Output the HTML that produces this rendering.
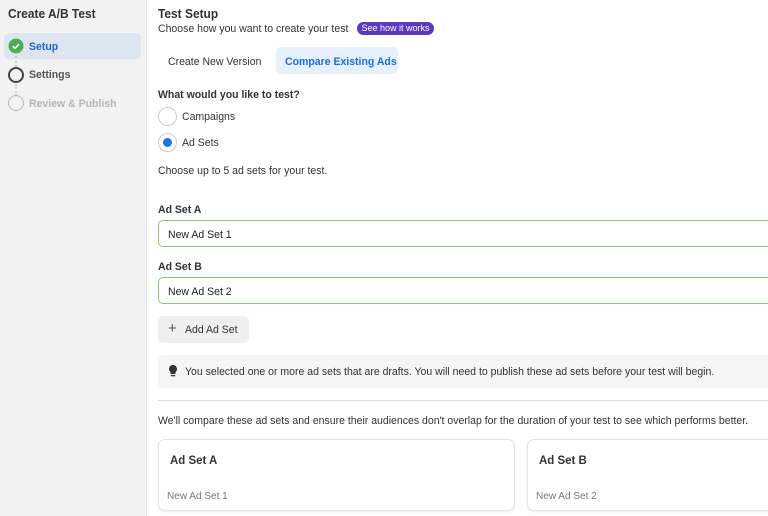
<!DOCTYPE html>
<html><head><meta charset="utf-8"><style>
*{box-sizing:border-box;margin:0;padding:0}
body{width:768px;height:516px;overflow:hidden;background:#fff;font-family:"Liberation Sans",Arial,sans-serif;color:#1c1e21;position:relative}
.a{position:absolute;white-space:nowrap}
.x{transform:scaleX(.955);transform-origin:left top;margin-top:1px}
.side{position:absolute;left:0;top:0;width:147px;height:516px;background:#f2f2f2;border-right:1px solid #e4e4e4}
.b{font-weight:bold}
.t11{font-size:11px}
.inp{position:absolute;left:158px;width:620px;height:27px;border:1.5px solid #8cc868;border-radius:5px}
.card{position:absolute;top:439px;height:72px;border:1px solid #e3e3e3;border-radius:7px;box-shadow:0 1px 2px rgba(0,0,0,.08)}
</style></head><body>
<div class="side"></div>
<div class="a b x" style="left:8px;top:6px;font-size:12.5px;color:#333">Create A/B Test</div>
<div class="a" style="left:4px;top:33px;width:137px;height:26px;background:#dde5f0;border-radius:5px"></div>
<svg class="a" style="left:8px;top:38px" width="16" height="16"><circle cx="8" cy="8" r="7.5" fill="#4caf50"/><path d="M4.8 8.2l2.2 2.1 4-4.2" stroke="#fff" stroke-width="1.5" fill="none"/></svg>
<div class="a b x" style="left:29px;top:40px;font-size:11px;color:#2563c9">Setup</div>
<div class="a" style="left:15px;top:56px;width:2px;height:11px;border-left:2px dotted #ccc"></div>
<div class="a" style="left:8px;top:67px;width:16px;height:16px;border:2px solid #444;border-radius:50%"></div>
<div class="a b x" style="left:29px;top:68px;font-size:11px;color:#555">Settings</div>
<div class="a" style="left:15px;top:84px;width:2px;height:12px;border-left:2px dotted #ccc"></div>
<div class="a" style="left:8px;top:95px;width:16px;height:16px;border:1.5px solid #bbb;border-radius:50%"></div>
<div class="a b x" style="left:29px;top:97px;font-size:11px;color:#b5b5b5">Review &amp; Publish</div>

<div class="a b x" style="left:158px;top:6px;font-size:12.5px;color:#333">Test Setup</div>
<div class="a t11 x" style="left:158px;top:22px;color:#333">Choose how you want to create your test</div>
<div class="a" style="left:357px;top:22px;width:77px;height:13px;background:#5b38c0;border-radius:7px;color:#fff;font-size:9px;line-height:13px;text-align:center">See how it works</div>
<div class="a t11 x" style="left:168px;top:55px;color:#333">Create New Version</div>
<div class="a" style="left:276px;top:47px;width:122px;height:27px;background:#e7f0fd;border-radius:5px"></div>
<div class="a b t11 x" style="left:285px;top:55px;color:#1b6fdc">Compare Existing Ads</div>
<div class="a b t11 x" style="left:158px;top:88px;color:#333">What would you like to test?</div>
<div class="a" style="left:158px;top:107px;width:19px;height:19px;border:1px solid #ccc;border-radius:50%;background:#fff"></div>
<div class="a t11 x" style="left:182px;top:110px;color:#333">Campaigns</div>
<div class="a" style="left:158px;top:133px;width:19px;height:19px;border:1px solid #ccc;border-radius:50%;background:#fff"></div>
<div class="a" style="left:163px;top:138px;width:9px;height:9px;background:#1b74e4;border-radius:50%"></div>
<div class="a t11 x" style="left:182px;top:136px;color:#333">Ad Sets</div>
<div class="a t11 x" style="left:158px;top:164px;color:#333">Choose up to 5 ad sets for your test.</div>
<div class="a b t11 x" style="left:158px;top:203px;color:#333">Ad Set A</div>
<div class="inp" style="top:220px"></div>
<div class="a t11 x" style="left:168px;top:228px;color:#222">New Ad Set 1</div>
<div class="a b t11 x" style="left:158px;top:260px;color:#333">Ad Set B</div>
<div class="inp" style="top:277px"></div>
<div class="a t11 x" style="left:168px;top:285px;color:#222">New Ad Set 2</div>
<div class="a" style="left:158px;top:316px;width:91px;height:27px;background:#efefef;border-radius:5px"></div>
<div class="a" style="left:168px;top:320px;font-size:15px;color:#555">+</div>
<div class="a t11 x" style="left:185px;top:323px;color:#333">Add Ad Set</div>
<div class="a" style="left:158px;top:355px;width:620px;height:33px;background:#f5f5f5;border-radius:5px"></div>
<svg class="a" style="left:168px;top:364px" width="10" height="14"><path d="M5 1a4 4 0 0 0-2.5 7.1V10h5V8.1A4 4 0 0 0 5 1z" fill="#333"/><rect x="2.8" y="11" width="4.4" height="1.3" fill="#333"/></svg>
<div class="a t11 x" style="left:185px;top:365px;color:#333">You selected one or more ad sets that are drafts. You will need to publish these ad sets before your test will begin.</div>
<div class="a" style="left:158px;top:400px;width:620px;height:1px;background:#ddd"></div>
<div class="a t11 x" style="left:158px;top:414px;color:#333">We'll compare these ad sets and ensure their audiences don't overlap for the duration of your test to see which performs better.</div>
<div class="card" style="left:158px;width:357px"></div>
<div class="card" style="left:527px;width:260px"></div>
<div class="a b x" style="left:170px;top:452px;font-size:12px;color:#333">Ad Set A</div>
<div class="a x" style="left:167px;top:489px;font-size:10.5px;color:#777">New Ad Set 1</div>
<div class="a b x" style="left:539px;top:452px;font-size:12px;color:#333">Ad Set B</div>
<div class="a x" style="left:536px;top:489px;font-size:10.5px;color:#777">New Ad Set 2</div>
</body></html>
